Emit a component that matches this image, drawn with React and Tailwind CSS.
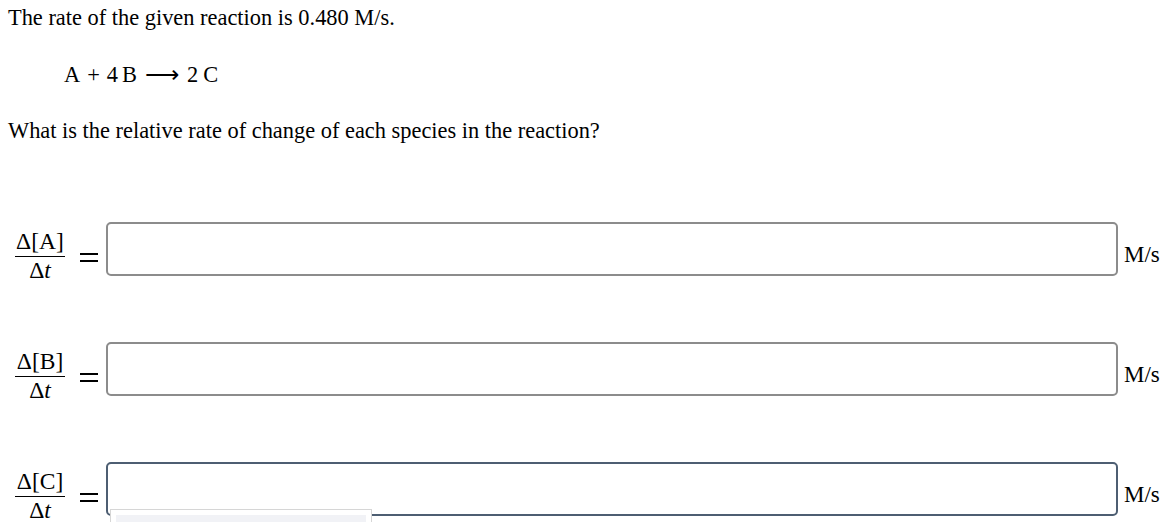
import React from 'react';

const serif = { fontFamily: '"Liberation Serif", "Times New Roman", serif' };

function Frac({ label }) {
  return (
    <div className="w-[50px] ml-[15px] flex flex-col items-center text-[23.5px] leading-[24px] mt-[12px]">
      <span>Δ[{label}]</span>
      <span className="w-full h-[1px] bg-black mt-[3px] mb-[1px]"></span>
      <span>
        Δ<i>t</i>
      </span>
    </div>
  );
}

function RateRow({ label, focused, children }) {
  return (
    <div className="relative flex items-center h-[54px]">
      <Frac label={label} />
      <span className="ml-[15px] mt-[16px] w-[18px] flex flex-col gap-[5px]">
        <span className="block h-[2px] bg-black"></span>
        <span className="block h-[2px] bg-black"></span>
      </span>
      <div
        className={
          'ml-[8px] w-[1012px] h-[54px] rounded-[5px] bg-white border-2 ' +
          (focused ? 'border-[#4d5e72]' : 'border-[#8c8c8c]')
        }
      ></div>
      <span className="ml-[6px] mt-[12px] text-[23px]">M/s</span>
      {children}
    </div>
  );
}

export default function App() {
  return (
    <div className="relative h-[522px] overflow-hidden bg-white text-black pt-[5px] pl-[8px]" style={serif}>
      <p className="text-[22.4px] leading-[26px]">The rate of the given reaction is 0.480 M/s.</p>
      <div className="mt-[31px] pl-[56px] text-[22.4px] leading-[26px] flex items-center">
        <span>A</span>
        <span className="mx-[7px]">+</span>
        <span>4</span>
        <span className="ml-[4px]">B</span>
        <span className="mx-[8px] text-[24px]">⟶</span>
        <span>2</span>
        <span className="ml-[5px]">C</span>
      </div>
      <p className="mt-[30px] text-[22.4px] leading-[26px]">
        What is the relative rate of change of each species in the reaction?
      </p>
      <div className="mt-[78px] -ml-[8px] flex flex-col gap-[66px]">
        <RateRow label="A" />
        <RateRow label="B" />
        <RateRow label="C" focused>
          <div className="absolute left-[110px] top-[47px] w-[262px] h-[40px] bg-white border border-[#d6d6d6] p-[5px]">
            <div className="h-full bg-[#f1f2f6]"></div>
          </div>
        </RateRow>
      </div>
    </div>
  );
}
